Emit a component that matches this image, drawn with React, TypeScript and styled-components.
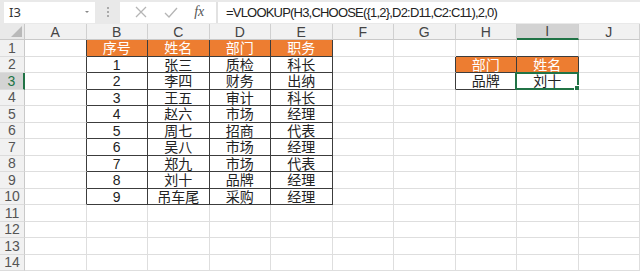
import styled, { createGlobalStyle } from 'styled-components';

const GlobalStyle = createGlobalStyle`
  html, body {
    margin: 0;
    padding: 0;
    background: #ffffff;
  }
  body {
    font-family: "Noto Sans", "Noto Sans CJK SC", sans-serif;
    overflow: hidden;
  }
`;

const ORANGE = '#ed7d31';
const GREEN = '#217346';
const GRID = '#dedede';
const DARK = '#3c3c3c';

const Page = styled.div`
  width: 640px;
  height: 271px;
  display: flex;
  flex-direction: column;
  background: #e9e9e9;
  overflow: hidden;
`;

const Toolbar = styled.div`
  height: 39px;
  display: flex;
  align-items: center;
  padding: 0 0 0 4px;
  box-sizing: border-box;
`;

const NameBox = styled.div`
  width: 91px;
  height: 21px;
  background: #fff;
  display: flex;
  align-items: center;
  justify-content: space-between;
  padding: 0 6px 0 5px;
  box-sizing: border-box;
  font-size: 13px;
  color: #333;
`;

const Caret = styled.span`
  width: 0;
  height: 0;
  border-left: 2px solid transparent;
  border-right: 2px solid transparent;
  border-top: 2px solid #888;
`;

const Grip = styled.div`
  width: 25px;
  display: flex;
  flex-direction: column;
  align-items: center;
  gap: 2px;
  span {
    width: 2px;
    height: 2px;
    background: #aaa;
  }
`;

const FormulaBar = styled.div`
  flex: 1;
  height: 21px;
  display: flex;
  background: #fff;
`;

const FxButtons = styled.div`
  width: 98px;
  display: flex;
  align-items: center;
  justify-content: space-around;
  padding: 0 4px 0 6px;
  border-right: 2px solid #e2e2e2;
  box-sizing: border-box;
`;

const Fx = styled.span`
  font-family: "Liberation Serif", serif;
  font-style: italic;
  font-size: 14px;
  color: #555;
`;

const FormulaText = styled.div`
  display: flex;
  align-items: center;
  padding-left: 8px;
  font-family: "Liberation Sans", sans-serif;
  font-size: 13px;
  letter-spacing: -0.8px;
  color: #222;
  white-space: nowrap;
`;

const Sheet = styled.div`
  display: grid;
  grid-template-columns: 25px repeat(10, 61.5px);
  grid-template-rows: 16px repeat(14, 16.5px);
  background: #fff;
`;

const Corner = styled.div`
  position: relative;
  background: #e9e9e9;
  border-right: 1px solid #c9c9c9;
  border-bottom: 1px solid #c9c9c9;
  box-sizing: border-box;
  &::after {
    content: '';
    position: absolute;
    right: 2px;
    bottom: 2px;
    width: 0;
    height: 0;
    border-left: 11px solid transparent;
    border-bottom: 11px solid #b9b9b9;
  }
`;

const ColHead = styled.div<{ $active?: boolean }>`
  display: flex;
  align-items: center;
  justify-content: center;
  background: ${({ $active }) => ($active ? '#d3d3d3' : '#f1f1f1')};
  border-right: 1px solid #d0d0d0;
  border-bottom: ${({ $active }) => ($active ? `2px solid ${GREEN}` : '1px solid #c9c9c9')};
  box-sizing: border-box;
  font-family: "Liberation Sans", sans-serif;
  font-size: 14px;
  color: #444;
`;

const RowHead = styled.div<{ $active?: boolean }>`
  display: flex;
  align-items: center;
  justify-content: center;
  background: ${({ $active }) => ($active ? '#d3d3d3' : '#f1f1f1')};
  border-right: ${({ $active }) => ($active ? `2px solid ${GREEN}` : '1px solid #c9c9c9')};
  border-bottom: 1px solid #dcdcdc;
  box-sizing: border-box;
  font-family: "Liberation Sans", sans-serif;
  font-size: 14px;
  color: ${({ $active }) => ($active ? GREEN : '#555')};
`;

const Cell = styled.div<{ $head?: boolean; $br: string; $bb: string }>`
  position: relative;
  display: flex;
  align-items: center;
  justify-content: center;
  padding-top: 1px;
  background: ${({ $head }) => ($head ? ORANGE : '#fff')};
  color: ${({ $head }) => ($head ? '#fff' : '#222')};
  border-right: 1px solid ${({ $br }) => $br};
  border-bottom: 1px solid ${({ $bb }) => $bb};
  box-sizing: border-box;
  font-family: "Liberation Sans", "Noto Sans CJK SC", sans-serif;
  font-size: 14px;
  line-height: 1;
`;

const Selection = styled.div`
  position: absolute;
  left: -2px;
  top: -1px;
  right: -1px;
  bottom: -1px;
  border: 2px solid ${GREEN};
  pointer-events: none;
  &::after {
    content: '';
    position: absolute;
    right: -4px;
    bottom: -4px;
    width: 5px;
    height: 5px;
    background: ${GREEN};
    border: 1px solid #fff;
  }
`;

const CrossIcon = () => (
  <svg width="14" height="14" viewBox="0 0 14 14">
    <path d="M2 2 L12 12 M12 2 L2 12" stroke="#b5b5b5" strokeWidth="1.3" fill="none" />
  </svg>
);

const CheckIcon = () => (
  <svg width="16" height="14" viewBox="0 0 16 14">
    <path d="M2 8 L6 12 L14 3" stroke="#b5b5b5" strokeWidth="1.3" fill="none" />
  </svg>
);

const COLS = ['A', 'B', 'C', 'D', 'E', 'F', 'G', 'H', 'I', 'J'];

const data: Record<string, string> = {};
const mainTable = [
  ['序号', '姓名', '部门', '职务'],
  ['1', '张三', '质检', '科长'],
  ['2', '李四', '财务', '出纳'],
  ['3', '王五', '审计', '科长'],
  ['4', '赵六', '市场', '经理'],
  ['5', '周七', '招商', '代表'],
  ['6', '吴八', '市场', '经理'],
  ['7', '郑九', '市场', '代表'],
  ['8', '刘十', '品牌', '经理'],
  ['9', '吊车尾', '采购', '经理'],
];
mainTable.forEach((row, r) => row.forEach((v, c) => (data[`${COLS[c + 1]}${r + 1}`] = v)));
data.H2 = '部门';
data.I2 = '姓名';
data.H3 = '品牌';
data.I3 = '刘十';

const headers = new Set(['B1', 'C1', 'D1', 'E1', 'H2', 'I2']);

const inTable = (r: number, c: number) =>
  (r >= 1 && r <= 10 && c >= 1 && c <= 4) || (r >= 2 && r <= 3 && c >= 7 && c <= 8);

export default function App() {
  const rows = Array.from({ length: 14 }, (_, i) => i + 1);
  return (
    <Page>
      <GlobalStyle />
      <Toolbar>
        <NameBox>
          <span>I3</span>
          <Caret />
        </NameBox>
        <Grip>
          <span />
          <span />
          <span />
        </Grip>
        <FormulaBar>
          <FxButtons>
            <CrossIcon />
            <CheckIcon />
            <Fx>fx</Fx>
          </FxButtons>
          <FormulaText>=VLOOKUP(H3,CHOOSE({'{'}1,2{'}'},D2:D11,C2:C11),2,0)</FormulaText>
        </FormulaBar>
      </Toolbar>
      <Sheet>
        <Corner />
        {COLS.map((c) => (
          <ColHead key={c} $active={c === 'I'}>
            {c}
          </ColHead>
        ))}
        {rows.map((r) => [
          <RowHead key={`h${r}`} $active={r === 3}>
            {r}
          </RowHead>,
          ...COLS.map((col, ci) => {
            const id = `${col}${r}`;
            const here = inTable(r, ci);
            const br = here || inTable(r, ci + 1) ? DARK : GRID;
            const bb = here || inTable(r + 1, ci) ? DARK : GRID;
            return (
              <Cell key={id} $head={headers.has(id)} $br={br} $bb={bb}>
                {data[id] ?? ''}
                {id === 'I3' && <Selection />}
              </Cell>
            );
          }),
        ])}
      </Sheet>
    </Page>
  );
}
